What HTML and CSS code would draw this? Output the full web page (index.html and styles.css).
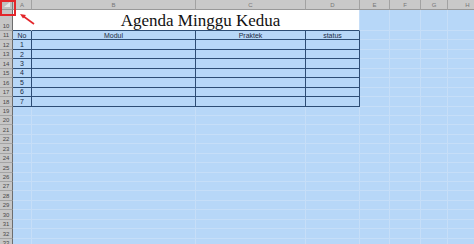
FILE: index.html
```html
<!DOCTYPE html>
<html lang="id">
<head>
<meta charset="utf-8">
<title>Agenda Minggu Kedua</title>
<link rel="stylesheet" href="styles.css">
</head>
<body>
<div class="sheet">
  <table class="grid">
    <colgroup>
      <col class="c-rh"><col class="c-a"><col class="c-b"><col class="c-c"><col class="c-d"><col class="c-e"><col class="c-f"><col class="c-g"><col class="c-h">
    </colgroup>
    <thead>
      <tr class="colhdr">
        <th class="corner"><span class="tri"></span></th><th>A</th><th>B</th><th>C</th><th>D</th><th>E</th><th>F</th><th>G</th><th>H</th>
      </tr>
    </thead>
    <tbody>
      <tr class="r-title"><th>10</th><td class="w"></td><td class="w title" colspan="3">Agenda Minggu Kedua</td><td></td><td></td><td></td><td></td></tr>
      <tr><th>11</th><td class="t">No</td><td class="t">Modul</td><td class="t">Praktek</td><td class="t">status</td><td></td><td></td><td></td><td></td></tr>
      <tr><th>12</th><td class="t">1</td><td class="t"></td><td class="t"></td><td class="t"></td><td></td><td></td><td></td><td></td></tr>
      <tr><th>13</th><td class="t">2</td><td class="t"></td><td class="t"></td><td class="t"></td><td></td><td></td><td></td><td></td></tr>
      <tr><th>14</th><td class="t">3</td><td class="t"></td><td class="t"></td><td class="t"></td><td></td><td></td><td></td><td></td></tr>
      <tr><th>15</th><td class="t">4</td><td class="t"></td><td class="t"></td><td class="t"></td><td></td><td></td><td></td><td></td></tr>
      <tr><th>16</th><td class="t">5</td><td class="t"></td><td class="t"></td><td class="t"></td><td></td><td></td><td></td><td></td></tr>
      <tr><th>17</th><td class="t">6</td><td class="t"></td><td class="t"></td><td class="t"></td><td></td><td></td><td></td><td></td></tr>
      <tr><th>18</th><td class="t">7</td><td class="t"></td><td class="t"></td><td class="t"></td><td></td><td></td><td></td><td></td></tr>
      <tr><th>19</th><td></td><td></td><td></td><td></td><td></td><td></td><td></td><td></td></tr>
      <tr><th>20</th><td></td><td></td><td></td><td></td><td></td><td></td><td></td><td></td></tr>
      <tr><th>21</th><td></td><td></td><td></td><td></td><td></td><td></td><td></td><td></td></tr>
      <tr><th>22</th><td></td><td></td><td></td><td></td><td></td><td></td><td></td><td></td></tr>
      <tr><th>23</th><td></td><td></td><td></td><td></td><td></td><td></td><td></td><td></td></tr>
      <tr><th>24</th><td></td><td></td><td></td><td></td><td></td><td></td><td></td><td></td></tr>
      <tr><th>25</th><td></td><td></td><td></td><td></td><td></td><td></td><td></td><td></td></tr>
      <tr><th>26</th><td></td><td></td><td></td><td></td><td></td><td></td><td></td><td></td></tr>
      <tr><th>27</th><td></td><td></td><td></td><td></td><td></td><td></td><td></td><td></td></tr>
      <tr><th>28</th><td></td><td></td><td></td><td></td><td></td><td></td><td></td><td></td></tr>
      <tr><th>29</th><td></td><td></td><td></td><td></td><td></td><td></td><td></td><td></td></tr>
      <tr><th>30</th><td></td><td></td><td></td><td></td><td></td><td></td><td></td><td></td></tr>
      <tr><th>31</th><td></td><td></td><td></td><td></td><td></td><td></td><td></td><td></td></tr>
      <tr><th>32</th><td></td><td></td><td></td><td></td><td></td><td></td><td></td><td></td></tr>
      <tr><th>33</th><td></td><td></td><td></td><td></td><td></td><td></td><td></td><td></td></tr>
    </tbody>
  </table>
  <div class="mark"></div>
  <svg class="arrow" width="40" height="30" viewBox="0 0 40 30">
    <line x1="34" y1="24" x2="23" y2="16" stroke="#e3262b" stroke-width="1.6"/>
    <polygon points="20,14 26,15 23,18.5" fill="#e3262b"/>
  </svg>
</div>
</body>
</html>
```

FILE: styles.css
```css
html, body {
  margin: 0;
  padding: 0;
  background: #b7d7f8;
  overflow: hidden;
}
.sheet {
  position: relative;
  width: 474px;
  height: 244px;
  overflow: hidden;
}
.grid {
  border-collapse: separate;
  border-spacing: 0;
  table-layout: fixed;
  width: 488px;
  font-family: "Liberation Sans", Arial, sans-serif;
  font-size: 7px;
  line-height: 1;
}
.c-rh { width: 13px; }
.c-a { width: 19px; }
.c-b { width: 164px; }
.c-c { width: 110px; }
.c-d { width: 54px; }
.c-e { width: 30px; }
.c-f { width: 31px; }
.c-g { width: 27px; }
.c-h { width: 40px; }

th, td {
  padding: 0;
  box-sizing: border-box;
  text-align: center;
  vertical-align: middle;
  overflow: hidden;
  white-space: nowrap;
}
tbody tr { height: 9.45px; }
tbody tr.r-title { height: 21px; }
.colhdr { height: 10px; }

.colhdr th {
  background: #c9c9c9;
  color: #777;
  font-weight: normal;
  font-size: 6px;
  border-right: 1px solid #a2a2a2;
  border-bottom: 1px solid #999;
}
.colhdr th.corner {
  position: relative;
  background: #c0c0c0;
  border-right: 1px solid #7a7a7a;
}
.tri {
  position: absolute;
  right: 2px;
  bottom: 2px;
  width: 0;
  height: 0;
  border-left: 6px solid transparent;
  border-bottom: 5px solid #e6e6e6;
}
tbody th {
  background: #c6c6c6;
  color: #4a4a4a;
  font-weight: normal;
  font-size: 6px;
  border-right: 1px solid #6e6e6e;
  border-bottom: 1px solid #a4a4a4;
  vertical-align: bottom;
  padding-bottom: 1px;
}
td {
  background: #b7d7f8;
  border-right: 1px solid #c6def8;
  border-bottom: 1px solid #c6def8;
  color: #1d2c44;
}
td.w {
  background: #fff;
  border-right-color: #fff;
  border-bottom: 1px solid #2d4d75;
}
td.title {
  font-family: "Liberation Serif", "DejaVu Serif", serif;
  font-size: 17px;
  color: #111;
  vertical-align: bottom;
  padding: 0 0 1px 10px;
  border-right-color: #c6def8;
}
td.t {
  border-right: 1px solid #2d4d75;
  border-bottom: 1px solid #2d4d75;
}
.mark {
  position: absolute;
  left: 0;
  top: 0;
  width: 16px;
  height: 16px;
  box-sizing: border-box;
  border: 2px solid #e3262b;
}
.arrow {
  position: absolute;
  left: 0;
  top: 0;
}
```
